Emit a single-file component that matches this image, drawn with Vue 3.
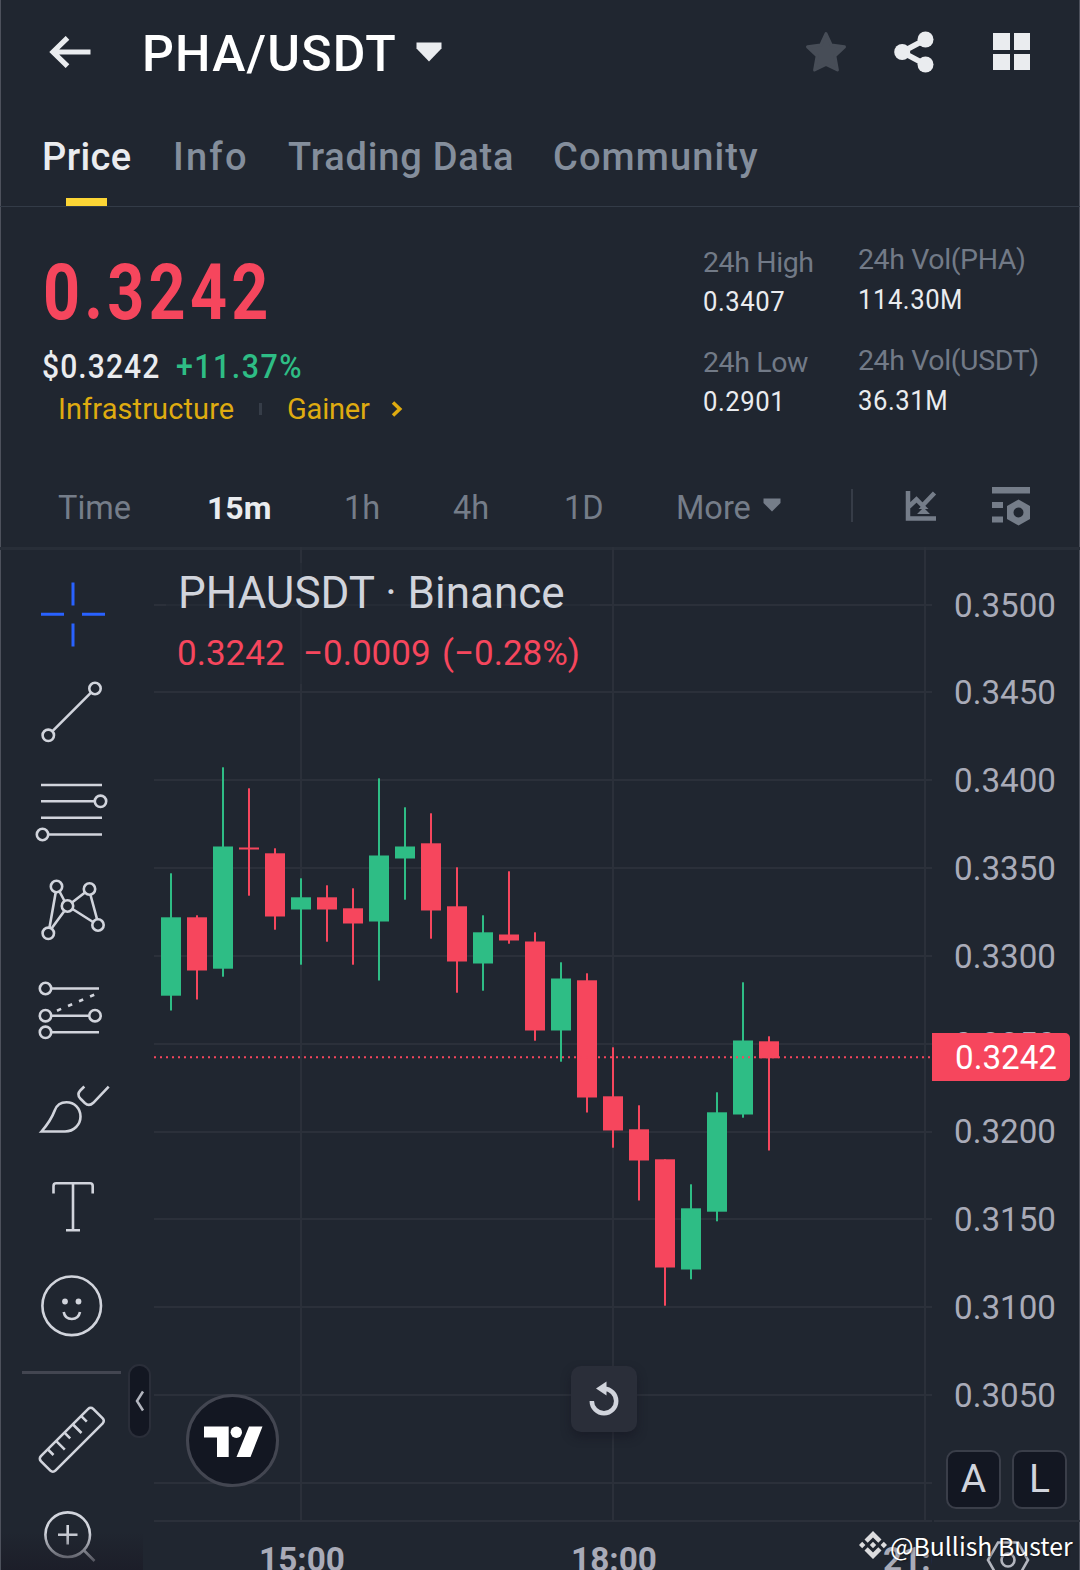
<template>
  <div class="screen">
    <header class="header">
      <svg class="back" width="42" height="32" viewBox="0 0 42 32">
        <path d="M18.5 1.8 4 16l14.5 14.2M4 16h37.5" />
      </svg>
      <h1 class="pair">PHA/USDT</h1>
      <svg class="pair-caret" width="26" height="20" viewBox="0 0 26 20">
        <path d="M0.5 0.5h25V6.5L13 19.5 0.5 6.5z" />
      </svg>
      <div class="actions">
        <svg class="star" width="42" height="42" viewBox="0 0 42 42">
          <path d="M21 2.5l5.3 11.6 13.2 1.7-9.6 9.1 2.5 14.1L21 33.5 9.6 39l2.5-14.1L2.5 15.8l13.2-1.7z" />
        </svg>
        <svg class="share" width="40" height="42" viewBox="0 0 40 42">
          <path d="M31.5 8.5 8 21l23.5 12.500" />
          <circle cx="31.5" cy="8.5" r="8" />
          <circle cx="8.2" cy="21" r="8" />
          <circle cx="31.5" cy="33.5" r="8" />
        </svg>
        <div class="apps"><i v-for="n in 4" :key="n"></i></div>
      </div>
    </header>

    <nav class="tabs">
      <span v-for="tab in tabs" :key="tab.label" :class="['tab', tab.name, { active: tab.active }]">{{ tab.label }}</span>
    </nav>

    <section class="quote">
      <div class="quote-main">
        <div class="last-price">0.3242</div>
        <div class="fiat">
          <span class="usd">$0.3242</span>
          <span class="change">+11.37%</span>
        </div>
        <div class="tags">
          <span class="tag-infra">Infrastructure</span>
          <i class="tag-sep"></i>
          <span class="tag-gainer">Gainer</span>
          <svg class="tag-arrow" width="12" height="16" viewBox="0 0 12 16">
            <path d="M2 1.5 8.8 8 2 14.5" />
          </svg>
        </div>
      </div>
      <dl v-for="(column, i) in stats" :key="i" :class="['stats', 'stats-' + i]">
        <template v-for="stat in column" :key="stat.label">
          <dt>{{ stat.label }}</dt>
          <dd>{{ stat.value }}</dd>
        </template>
      </dl>
    </section>

    <div class="intervals">
      <span>Time</span>
      <span class="selected">15m</span>
      <span>1h</span>
      <span>4h</span>
      <span>1D</span>
      <span class="more">
        More
        <svg width="18" height="14" viewBox="0 0 18 14"><path d="M0.5 0.5h17V5L9 13.5 0.5 5z" /></svg>
      </span>
      <i class="interval-sep"></i>
      <svg class="tool-icon" width="32" height="32" viewBox="0 0 32 32">
        <path class="line" d="M3 1v27.500h28M4 16.500l7.500-7 6 6L29.500 3" />
        <path d="M18.500 14l5 5h-10zM12 24l6.500-6.500 6.500 6.500z" />
      </svg>
      <svg class="tool-icon" width="40" height="40" viewBox="0 0 40 40">
        <path d="M1 1h38v6.500H1zM1 16h11v6H1zM1 30.500h11v6H1z" />
        <path fill-rule="evenodd" d="M27.500 13.500 39 20v13l-11.500 6.500L16 33V20zM27.500 21.500a5 5 0 1 0 0 10 5 5 0 1 0 0-10z" />
      </svg>
    </div>

    <section class="chart">
      <aside class="toolbar">
        <svg class="tool cross" width="154" height="99">
          <path d="M41 49.300h23M82 49.300h23M73 17.500v23M73 58.500v23" />
        </svg>
        <svg class="tool" width="154" height="99">
          <path d="M52.500 67.200 91 28.600" />
          <circle cx="48.300" cy="71.300" r="5.700" />
          <circle cx="95" cy="24.500" r="5.700" />
        </svg>
        <svg class="tool" width="154" height="99">
          <path d="M41 22h61M41 38.300h53.500M41 54.800h61M48.500 71.500H102" />
          <circle cx="100.500" cy="38.300" r="5.700" />
          <circle cx="42.500" cy="71.500" r="5.700" />
        </svg>
        <svg class="tool" width="154" height="99">
          <path d="M55.700 30.500 49.500 65.500M59.500 29.500l5 9.500M51.500 66.500l12.500-17M72 40.500l13-10M72.500 47l20.500 13M90.500 33l6.500 24" />
          <circle cx="56.500" cy="24.500" r="5.700" />
          <circle cx="89.500" cy="27" r="5.700" />
          <circle cx="67.500" cy="44" r="5.700" />
          <circle cx="98" cy="63" r="5.700" />
          <circle cx="48.300" cy="71.300" r="5.700" />
        </svg>
        <svg class="tool" width="154" height="99">
          <path d="M51.500 27.500H99M51.500 54.700H89M51.500 71.300H99" />
          <path class="dots" d="M57 49.700 97 32.500" />
          <circle cx="45.500" cy="27.500" r="5.700" />
          <circle cx="45.500" cy="54.700" r="5.700" />
          <circle cx="95" cy="54.700" r="5.700" />
          <circle cx="45.500" cy="71.300" r="5.700" />
        </svg>
        <svg class="tool" width="154" height="99">
          <path d="M41.500 71.500H65C74 71.500 80.500 64.500 80.500 56.500 80.500 48.500 74.500 42.300 66.500 42.300 60.500 42.300 56.500 45.500 54.700 50.500 51.500 59 48 64 41.500 71.500z" />
          <path d="M84.300 26.500 80.300 30.500Q76.500 34.500 80.300 38.500L84.800 43Q89 47 93.300 42.800L108.700 26.700" />
        </svg>
        <svg class="tool" width="154" height="99">
          <path d="M53.500 34.500V27Q53.500 24.300 56.200 24.300H90Q92.700 24.300 92.700 27V34.500M73 24.300V71.300M66 71.300H80" />
        </svg>
        <svg class="tool" width="154" height="99">
          <circle cx="71.700" cy="47.800" r="29.300" />
          <path d="M63.700 54Q65 61 71.800 61 78.500 61 80 54" />
          <circle class="dot" cx="65" cy="43.500" r="2.900" />
          <circle class="dot" cx="78.500" cy="43.500" r="2.900" />
        </svg>
        <hr class="tool-rule">
        <svg class="tool" width="154" height="99">
          <rect x="34.800" y="39.500" width="74" height="20.500" rx="3.500" transform="rotate(-45 71.800 49.750)" />
          <path d="M48 59.500l5.500 5.500M56.300 51.200l8.500 8.500M64.700 42.800l5.500 5.500M73 34.500l8.500 8.500M81.300 26.200l5.500 5.500" />
        </svg>
        <svg class="tool" width="154" height="81">
          <circle cx="67.700" cy="45.700" r="22.300" />
          <path d="M58 45.700h19.500M67.700 36v19.500M83.500 61l11 11" />
        </svg>
        <div class="toolbar-fade"></div>
        <button class="collapse">
          <svg width="10" height="22" viewBox="0 0 10 22"><path d="M8 1.500 2 11l6 9.500" /></svg>
        </button>
      </aside>

      <div class="plot">
        <svg width="778" height="1023" viewBox="154 547 778 1023">
          <g class="grid">
            <rect v-for="y in gridRows" :key="'r' + y" x="154" :y="y" width="778" height="2" />
            <rect v-for="x in gridCols" :key="'c' + x" :x="x - 1" y="547" width="2" height="974" />
            <rect x="154" y="1520" width="778" height="2" />
          </g>
          <g v-for="(c, i) in candles" :key="i" :class="c.up ? 'up' : 'down'">
            <rect :x="c.x - 1" :y="c.high" width="2" :height="c.low - c.high" />
            <rect :x="c.x - 10" :y="c.top" width="20" :height="c.bottom - c.top" />
          </g>
          <path class="price-line" d="M154 1057.300H932" />
          <text v-for="(label, i) in times" :key="label" class="time" :x="gridCols[i] + 1" y="1571">{{ label }}</text>
        </svg>

        <div class="legend">
          <div class="symbol">PHAUSDT · Binance</div>
          <div class="legend-values">
            <span class="lv-price">0.3242</span>
            <span class="lv-diff">−0.0009</span>
            <span class="lv-percent">(−0.28%)</span>
          </div>
        </div>

        <div class="tv-logo">
          <svg width="60" height="32" viewBox="0 0 60 32">
            <path d="M1 0.500h24.700V31H14V11.500H1zM46 0.500h13.500L47.500 31H33.500z" />
            <circle cx="33.300" cy="6.200" r="5.700" />
          </svg>
        </div>

        <button class="reset">
          <svg width="34" height="38" viewBox="0 0 34 38">
            <path class="arc" d="M4.800 20a12.200 12.200 0 1 0 12.200-12.200" />
            <path d="M19.500 0.500v14L9 7.500z" />
          </svg>
        </button>
      </div>

      <aside class="axis">
        <div class="axis-labels">
          <span v-for="price in prices" :key="price">{{ price }}</span>
        </div>
        <div class="price-tag">0.3242</div>
        <div class="scale-modes">
          <button>A</button>
          <button>L</button>
        </div>
        <div class="axis-foot">
          <svg width="44" height="50" viewBox="0 0 44 50">
            <path d="M2 22 12 4.500h20L42 22 32 39.500H12z" />
            <circle cx="22" cy="22" r="6.500" />
          </svg>
        </div>
      </aside>
    </section>

    <div class="watermark">
      <svg width="28" height="28" viewBox="0 0 28 28">
        <path d="M14 0l8.500 8.500-3.200 3.200L14 6.400 8.700 11.700 5.500 8.500zM14 28l8.500-8.500-3.200-3.200L14 21.600l-5.300-5.300-3.200 3.200zM3.200 10.800 6.400 14l-3.200 3.200L0 14zM24.800 10.800 28 14l-3.200 3.200-3.200-3.200zM14 10.800l3.200 3.200-3.200 3.200-3.200-3.200z" />
      </svg>
      <span>@Bullish Buster</span>
    </div>
  </div>
</template>

<script setup>
const tabs = [
  { label: 'Price', name: 'price', active: true },
  { label: 'Info', name: 'info' },
  { label: 'Trading Data', name: 'trading' },
  { label: 'Community', name: 'community' },
];

const stats = [
  [
    { label: '24h High', value: '0.3407' },
    { label: '24h Low', value: '0.2901' },
  ],
  [
    { label: '24h Vol(PHA)', value: '114.30M' },
    { label: '24h Vol(USDT)', value: '36.31M' },
  ],
];

const prices = ['0.3500', '0.3450', '0.3400', '0.3350', '0.3300', '0.3250', '0.3200', '0.3150', '0.3100', '0.3050'];
const times = ['15:00', '18:00', '21:00'];

const gridCols = [301, 613, 925];
const gridRows = Array.from({ length: 11 }, (_, i) => Math.round(603.6 + i * 87.83));

// high, body top, body bottom, low, rising
const series = [
  [873.3, 917.3, 995.7, 1010.5, 1],
  [915.3, 917.3, 970.5, 999.5, 0],
  [767.3, 846.5, 968.7, 976.7, 1],
  [788.3, 847.5, 849.5, 895.7, 0],
  [848.3, 853.3, 916.5, 929.7, 0],
  [878.3, 897.3, 909.5, 964.7, 1],
  [885.3, 897.3, 909.5, 941.7, 0],
  [888.3, 908.3, 923.5, 964.7, 0],
  [778.3, 855.5, 921.5, 980.5, 1],
  [807.3, 846.5, 858.5, 899.7, 1],
  [813.3, 843.3, 910.5, 938.7, 0],
  [867.3, 906.3, 961.5, 992.7, 0],
  [915.3, 932.3, 963.5, 990.7, 1],
  [871.3, 934.5, 940.5, 943.7, 0],
  [932.3, 941.5, 1030.5, 1040.7, 0],
  [962.3, 978.5, 1030.5, 1061.7, 1],
  [973.3, 980.3, 1097.5, 1112.5, 0],
  [1047.3, 1096.3, 1130.5, 1147.7, 0],
  [1105.3, 1129.3, 1160.5, 1200.5, 0],
  [1159.3, 1159.3, 1267.5, 1305.7, 0],
  [1184.3, 1208.3, 1269.5, 1279.3, 1],
  [1092.3, 1112.3, 1211.7, 1221.3, 1],
  [982.3, 1040.5, 1114.5, 1117.7, 1],
  [1036.3, 1041.3, 1058.3, 1150.5, 0],
];

const candles = series.map(([high, top, bottom, low, up], i) => ({
  x: 171 + i * 26,
  high,
  top,
  bottom,
  low,
  up,
}));
</script>

<style>
body {
  background: #202630;
}
</style>

<style scoped>
.screen {
  position: relative;
  box-sizing: border-box;
  width: 1080px;
  height: 1570px;
  overflow: hidden;
  background: #202630;
  box-shadow: inset 1px 0 #4d515c, inset -1px 0 #4d515c;
  font-family: Roboto, "Liberation Sans", sans-serif;
  color: #eaecef;
}

svg {
  display: block;
  flex: none;
}

button {
  margin: 0;
  padding: 0;
  font: inherit;
}

/* header */
.header {
  display: flex;
  align-items: center;
  height: 103px;
  padding: 0 50px 0 49px;
}

.back path {
  fill: none;
  stroke: #eaecef;
  stroke-width: 5.2;
}

.pair {
  margin: 0 0 0 51px;
  padding-top: 5px;
  width: 274px;
  font-size: 50px;
  font-weight: 500;
  line-height: 60px;
  letter-spacing: 1.2px;
  color: #fff;
}

.pair-caret {
  fill: #eaecef;
}

.actions {
  display: flex;
  align-items: center;
  margin-left: auto;
}

.star path {
  fill: #474d57;
  stroke: #474d57;
  stroke-width: 3;
  stroke-linejoin: round;
}

.share {
  margin: 0 59px 0 47px;
  fill: #eaecef;
}

.share path {
  fill: none;
  stroke: #eaecef;
  stroke-width: 5.5;
}

.apps {
  display: grid;
  grid-template-columns: 16.5px 16.5px;
  grid-auto-rows: 16.5px;
  gap: 4px;
}

.apps i {
  background: #eaecef;
}

/* tabs */
.tabs {
  display: flex;
  box-sizing: border-box;
  height: 104px;
  padding-left: 42px;
  border-bottom: 1px solid #333b47;
}

.tab {
  font-size: 38px;
  font-weight: 500;
  line-height: 108px;
  color: #848e9c;
  white-space: nowrap;
}

.tab.price {
  width: 131px;
  letter-spacing: 0.4px;
}

.tab.info {
  width: 115px;
  letter-spacing: 2.2px;
}

.tab.trading {
  width: 265px;
  letter-spacing: 0.8px;
}

.tab.community {
  letter-spacing: 1.1px;
}

.tab.active {
  position: relative;
  color: #eaecef;
}

.tab.active::after {
  content: "";
  position: absolute;
  left: 24px;
  top: 94.5px;
  width: 41px;
  height: 8px;
  background: #fcd535;
}

/* quote */
.quote {
  display: flex;
  height: 263px;
  padding-left: 43px;
}

.quote-main {
  width: 660px;
  padding-top: 56px;
}

.last-price {
  font-size: 77px;
  font-weight: 700;
  line-height: 60px;
  letter-spacing: 5px;
  color: #f6465d;
  transform: scaleX(0.84);
  transform-origin: left;
}

.fiat {
  display: flex;
  margin-top: 24px;
  font-size: 33px;
  font-weight: 500;
  line-height: 40px;
}

.usd {
  width: 133px;
  margin-left: -1px;
  letter-spacing: 1.2px;
  transform: scaleX(0.91);
  transform-origin: left;
}

.change {
  margin-left: 1px;
  letter-spacing: 1.6px;
  color: #2ebd85;
  transform: scaleX(0.92);
  transform-origin: left;
}

.tags {
  display: flex;
  align-items: center;
  margin-top: 2px;
  padding-left: 15px;
  font-size: 29px;
  line-height: 40px;
  color: #dfab10;
}

.tag-infra {
  width: 201px;
  letter-spacing: 0.1px;
}

.tag-sep {
  width: 3px;
  height: 12px;
  background: #363d48;
}

.tag-gainer {
  width: 104px;
  margin-left: 25px;
  letter-spacing: -0.2px;
}

.tag-arrow path {
  fill: none;
  stroke: #dfab10;
  stroke-width: 3.5;
}

.stats {
  margin: 0;
  width: 155px;
  white-space: nowrap;
}

.stats-0 {
  padding-top: 37px;
  line-height: 38.5px;
}

.stats-1 {
  padding-top: 33px;
  line-height: 40px;
}

.stats dt {
  font-size: 28.5px;
  letter-spacing: -0.4px;
  color: #727a87;
}

.stats dd {
  margin: 0 0 23px;
  font-size: 28.5px;
  letter-spacing: 0.6px;
  transform: scaleX(0.9);
  transform-origin: left;
}

.stats-1 dd {
  margin-bottom: 20.5px;
}

/* intervals */
.intervals {
  display: grid;
  grid-template-columns: 149px 137px 109px 111px 112px 175px 54px 86px 40px;
  align-items: center;
  height: 76px;
  padding-left: 58px;
  margin-bottom: 1px;
  font-size: 32.5px;
  line-height: 40px;
  color: #757d89;
}

.intervals .selected {
  font-size: 32px;
  font-weight: 700;
  color: #eaecef;
}

.more {
  display: flex;
  align-items: center;
  gap: 12px;
}

.more svg,
.tool-icon {
  fill: #757d89;
}

.more svg {
  margin-bottom: 7px;
}

.interval-sep {
  width: 2px;
  height: 33px;
  margin-bottom: 5px;
  background: #363c47;
}

.tool-icon {
  margin-bottom: 5px;
}

.tool-icon .line {
  fill: none;
  stroke: #757d89;
  stroke-width: 4.5;
}

/* chart */
.chart {
  display: flex;
  height: 1023px;
  box-shadow: inset 0 3px #282e38;
}

.toolbar {
  position: relative;
  box-sizing: border-box;
  width: 154px;
  padding-top: 18px;
}

.tool {
  fill: none;
  stroke: #d1d4dc;
  stroke-width: 2.6;
}

.tool.cross {
  stroke: #2962ff;
  stroke-width: 3;
}

.tool .dots {
  stroke-dasharray: 4.5 7.5;
}

.tool .dot {
  fill: #d1d4dc;
  stroke: none;
}

.tool-rule {
  width: 99px;
  height: 3px;
  margin: 14px 0 16px 22px;
  border: 0;
  background: #434651;
}

.toolbar-fade {
  position: absolute;
  left: 1px;
  bottom: 0;
  width: 142px;
  height: 38px;
  background: linear-gradient(rgba(28, 29, 40, 0), rgba(28, 29, 40, 0.9));
}

.collapse {
  position: absolute;
  left: 128px;
  top: 817px;
  box-sizing: border-box;
  display: flex;
  align-items: center;
  justify-content: center;
  width: 23px;
  height: 74px;
  border: 2px solid #2a2e39;
  border-radius: 11px;
  background: #131722;
}

.collapse path {
  fill: none;
  stroke: #b2b5be;
  stroke-width: 2.5;
}

.plot {
  position: relative;
  width: 778px;
}

.grid {
  fill: #2b303a;
}

.up {
  fill: #2ebd85;
}

.down {
  fill: #f6465d;
}

.price-line {
  stroke: #f6465d;
  stroke-width: 2;
  stroke-dasharray: 2 4;
}

.time {
  fill: #a9abb8;
  font-size: 33.3px;
  font-weight: 700;
  text-anchor: middle;
}

.legend {
  position: absolute;
  left: 12px;
  top: 16px;
  padding: 0 10px 0 12px;
  background: rgba(32, 38, 48, 0.5);
  white-space: nowrap;
}

.symbol {
  font-size: 44px;
  line-height: 60px;
  color: #d1d4dc;
}

.legend-values {
  display: flex;
  margin-left: -1px;
  font-size: 35px;
  line-height: 61px;
  color: #f6465d;
}

.lv-price {
  width: 126px;
}

.lv-diff {
  width: 139px;
}

.tv-logo {
  position: absolute;
  left: 32px;
  top: 847px;
  box-sizing: border-box;
  display: flex;
  align-items: center;
  justify-content: center;
  width: 93px;
  height: 93px;
  border: 3px solid #434651;
  border-radius: 50%;
  background: #131722;
}

.tv-logo svg {
  margin-top: 2px;
  fill: #fff;
}

.reset {
  position: absolute;
  left: 417px;
  top: 819px;
  display: flex;
  align-items: center;
  justify-content: center;
  width: 66px;
  height: 66px;
  border: 0;
  border-radius: 10px;
  background: #2a2e39;
  box-shadow: 0 5px 10px rgba(19, 20, 32, 0.5);
}

.reset svg {
  margin-top: 2px;
  fill: #d1d4dc;
}

.reset .arc {
  fill: none;
  stroke: #d1d4dc;
  stroke-width: 4.5;
}

/* price axis */
.axis {
  position: relative;
  flex: 1;
}

.axis-labels {
  display: flex;
  flex-direction: column;
  padding: 14.5px 0 0 22px;
  font-size: 33.2px;
  color: #a9abb8;
}

.axis-labels span {
  height: 87.83px;
  line-height: 87.83px;
}

.price-tag {
  position: absolute;
  left: 0;
  top: 486px;
  box-sizing: border-box;
  width: 138px;
  height: 48px;
  padding-left: 23px;
  border-radius: 0 5px 5px 0;
  background: #f6465d;
  font-size: 33.2px;
  line-height: 49px;
  color: #fff;
}

.scale-modes {
  display: flex;
  gap: 11px;
  padding: 10.5px 0 0 14px;
}

.scale-modes button {
  box-sizing: border-box;
  width: 55px;
  height: 59px;
  border: 2px solid #3a3e49;
  border-radius: 10px;
  background: #131722;
  font-size: 39px;
  line-height: 55px;
  color: #d1d4dc;
}

.axis-foot {
  margin: 11px 0 0 2px;
  padding-left: 52px;
  border-top: 2px solid #2b303a;
}

.axis-foot svg {
  margin-top: 16px;
  fill: none;
  stroke: #b2b5be;
  stroke-width: 2.6;
}

.watermark {
  position: absolute;
  left: 859px;
  top: 1525px;
  display: flex;
  align-items: center;
  gap: 3px;
  height: 40px;
  font-family: "Noto Sans CJK SC", "Noto Sans", sans-serif;
  font-size: 24.8px;
  color: #fff;
  white-space: nowrap;
  text-shadow: 1px 1px 2px rgba(0, 0, 0, 0.5);
}

.watermark span {
  margin-top: -1px;
}

.watermark svg {
  fill: #dcdcde;
}
</style>
